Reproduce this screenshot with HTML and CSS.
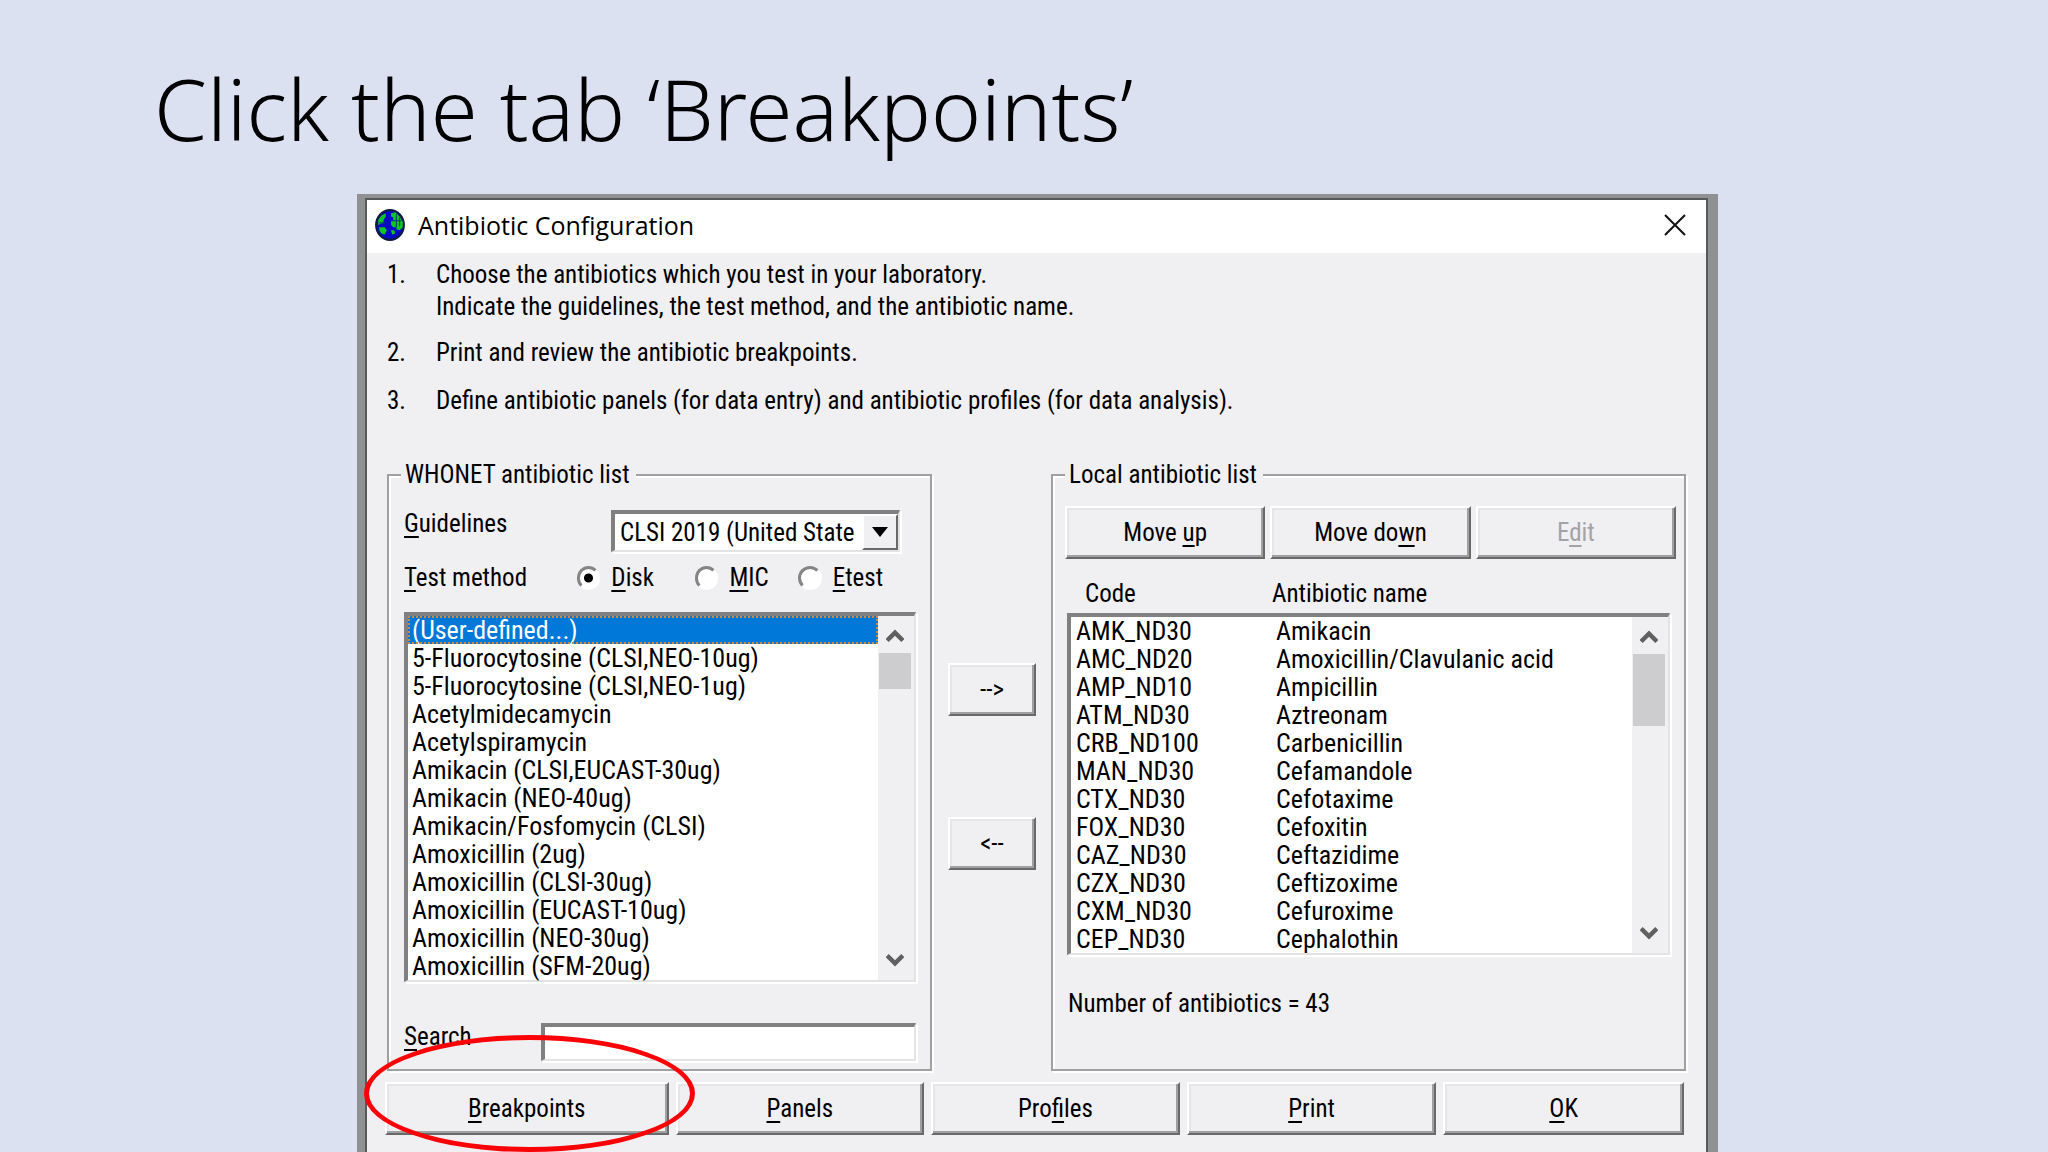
FILE: index.html
```html
<!DOCTYPE html>
<html lang="en">
<head>
<meta charset="utf-8">
<meta name="viewport" content="width=device-width, initial-scale=1">
<title>Click the tab ‘Breakpoints’</title>
<link rel="stylesheet" href="styles.css">
</head>
<body>
<main class="slide">
  <h1 class="slide-title">Click the tab ‘Breakpoints’</h1>
  <section class="window" aria-labelledby="window-title">
    <header class="titlebar">
      <svg class="globe" viewBox="0 0 28 30" aria-hidden="true">
        <ellipse cx="14" cy="15" rx="13" ry="14" fill="#0808c8" stroke="#0c1c40" stroke-width="2"/>
        <path d="M3 10l3-4 4-2v3l-2 3v3l-3 1-2 1zM4 17h5l2 3-2 4-3-1-2-3zM15 4l4-1 4 4 3 5v5l-3 3-3-1v-2h-3l-2-2v-4h2V8l-2-1zM15 20h3l1 3-3 1z" fill="#0cc81c"/>
        <path d="M15 11h10M20 5v12M23 8v8M4 13h5" stroke="#063c70" stroke-width="1" fill="none"/>
      </svg>
      <h2 class="window-title" id="window-title">Antibiotic Configuration</h2>
      <button class="close" type="button" aria-label="Close">
        <svg viewBox="0 0 22 22" aria-hidden="true"><path d="M1 1l20 20M21 1L1 21" fill="none" stroke="#111" stroke-width="2"/></svg>
      </button>
    </header>
    <form class="content">
      <ol class="steps">
        <li><span class="num">1.</span><span>Choose the antibiotics which you test in your laboratory.<br>Indicate the guidelines, the test method, and the antibiotic name.</span></li>
        <li><span class="num">2.</span><span>Print and review the antibiotic breakpoints.</span></li>
        <li><span class="num">3.</span><span>Define antibiotic panels (for data entry) and antibiotic profiles (for data analysis).</span></li>
      </ol>
      <div class="columns">
        <fieldset class="group whonet">
          <legend>WHONET antibiotic list</legend>
          <div class="row guidelines">
            <label for="guidelines"><u>G</u>uidelines</label>
            <div class="combo sunken">
              <select id="guidelines"><option>CLSI 2019 (United State</option></select>
              <span class="combo-arrow" aria-hidden="true"><svg viewBox="0 0 16 10"><path d="M0 0h16L8 10z"/></svg></span>
            </div>
          </div>
          <div class="row method">
            <span class="method-label"><u>T</u>est method</span>
            <input type="radio" name="method" id="disk" checked><label for="disk"><u>D</u>isk</label>
            <input type="radio" name="method" id="mic"><label for="mic"><u>M</u>IC</label>
            <input type="radio" name="method" id="etest"><label for="etest"><u>E</u>test</label>
          </div>
          <div class="list sunken">
            <ul class="items" role="listbox" aria-label="WHONET antibiotic list">
              <li role="option" aria-selected="true">(User-defined...)</li>
              <li role="option">5-Fluorocytosine (CLSI,NEO-10ug)</li>
              <li role="option">5-Fluorocytosine (CLSI,NEO-1ug)</li>
              <li role="option">Acetylmidecamycin</li>
              <li role="option">Acetylspiramycin</li>
              <li role="option">Amikacin (CLSI,EUCAST-30ug)</li>
              <li role="option">Amikacin (NEO-40ug)</li>
              <li role="option">Amikacin/Fosfomycin (CLSI)</li>
              <li role="option">Amoxicillin (2ug)</li>
              <li role="option">Amoxicillin (CLSI-30ug)</li>
              <li role="option">Amoxicillin (EUCAST-10ug)</li>
              <li role="option">Amoxicillin (NEO-30ug)</li>
              <li role="option">Amoxicillin (SFM-20ug)</li>
            </ul>
            <div class="scrollbar" aria-hidden="true">
              <svg class="chevron" viewBox="0 0 16 12"><path d="M1 10l7-7 7 7"/></svg>
              <div class="track"><div class="thumb"></div></div>
              <svg class="chevron" viewBox="0 0 16 12"><path d="M1 2l7 7 7-7"/></svg>
            </div>
          </div>
          <div class="row search">
            <label for="search"><u>S</u>earch</label>
            <input class="sunken" type="text" id="search">
          </div>
        </fieldset>
        <div class="transfer">
          <button class="btn" type="button" aria-label="Add to local list">--&gt;</button>
          <button class="btn" type="button" aria-label="Remove from local list">&lt;--</button>
        </div>
        <fieldset class="group local">
          <legend>Local antibiotic list</legend>
          <div class="actions">
            <button class="btn" type="button">Move <u>u</u>p</button>
            <button class="btn" type="button">Move do<u>w</u>n</button>
            <button class="btn" type="button" disabled>E<u>d</u>it</button>
          </div>
          <div class="heads"><span>Code</span><span>Antibiotic name</span></div>
          <div class="list sunken">
            <table class="items" aria-label="Local antibiotic list">
              <tbody>
                <tr><td class="code">AMK_ND30</td><td>Amikacin</td></tr>
                <tr><td class="code">AMC_ND20</td><td>Amoxicillin/Clavulanic acid</td></tr>
                <tr><td class="code">AMP_ND10</td><td>Ampicillin</td></tr>
                <tr><td class="code">ATM_ND30</td><td>Aztreonam</td></tr>
                <tr><td class="code">CRB_ND100</td><td>Carbenicillin</td></tr>
                <tr><td class="code">MAN_ND30</td><td>Cefamandole</td></tr>
                <tr><td class="code">CTX_ND30</td><td>Cefotaxime</td></tr>
                <tr><td class="code">FOX_ND30</td><td>Cefoxitin</td></tr>
                <tr><td class="code">CAZ_ND30</td><td>Ceftazidime</td></tr>
                <tr><td class="code">CZX_ND30</td><td>Ceftizoxime</td></tr>
                <tr><td class="code">CXM_ND30</td><td>Cefuroxime</td></tr>
                <tr><td class="code">CEP_ND30</td><td>Cephalothin</td></tr>
              </tbody>
            </table>
            <div class="scrollbar" aria-hidden="true">
              <svg class="chevron" viewBox="0 0 16 12"><path d="M1 10l7-7 7 7"/></svg>
              <div class="track"><div class="thumb"></div></div>
              <svg class="chevron" viewBox="0 0 16 12"><path d="M1 2l7 7 7-7"/></svg>
            </div>
          </div>
          <p class="count">Number of antibiotics = 43</p>
        </fieldset>
      </div>
      <div class="bottom">
        <div class="marked"><button class="btn" type="button"><u>B</u>reakpoints</button></div>
        <button class="btn" type="button"><u>P</u>anels</button>
        <button class="btn" type="button">Pro<u>f</u>iles</button>
        <button class="btn" type="button"><u>P</u>rint</button>
        <button class="btn" type="button"><u>O</u>K</button>
      </div>
    </form>
  </section>
</main>
</body>
</html>
```
FILE: styles.css
```css
:root {
  --face: #f0eff2;
  --shade: #a0a0a0;
  --dark: #696969;
}

* {
  box-sizing: border-box;
}

body {
  margin: 0;
  background: #dce1f2;
  color: #000;
  font: 25px/28px "Roboto Condensed", Roboto, "Liberation Sans", sans-serif;
}

h1, h2, p, ol, ul {
  margin: 0;
  padding: 0;
}

ol, ul {
  list-style: none;
}

button, input, select {
  margin: 0;
  font: inherit;
  color: inherit;
}

u {
  text-decoration-thickness: 2px;
  text-underline-offset: 4px;
  text-decoration-skip-ink: none;
}

.slide {
  display: flex;
  flex-direction: column;
  min-height: 100vh;
}

.slide-title {
  padding: 50px 154px 28px;
  font: 300 85px/116px "Noto Sans", "Open Sans", sans-serif;
}

/* Dialog frame */
.window {
  flex: 1;
  margin: 0 330px 0 357px;
  border: solid #8f9192;
  border-width: 4px 10px 0 8px;
}

.titlebar {
  display: flex;
  align-items: center;
  height: 55px;
  padding: 0 20px 4px 8px;
  border: solid #58595b;
  border-width: 2px 2px 0;
  background: #fff;
}

.globe {
  width: 30px;
  height: 32px;
}

.window-title {
  flex: 1;
  padding-left: 13px;
  font: 400 25px/32px "Open Sans", "Noto Sans", sans-serif;
}

.close {
  display: flex;
  padding: 0;
  border: 0;
  background: none;
}

.close svg {
  width: 22px;
  height: 22px;
}

.content {
  padding: 6px 20px 18px;
  border: solid #58595b;
  border-width: 0 2px;
  background: var(--face);
}

/* Instructions */
.steps {
  margin-bottom: 44px;
  line-height: 32px;
}

.steps li {
  display: flex;
}

.steps li + li {
  margin-top: 14px;
}

.steps li:last-child {
  margin-top: 16px;
}

.num {
  flex: none;
  width: 49px;
}

.columns {
  display: grid;
  grid-template-columns: 545fr 119fr 635fr;
}

.group {
  min-width: 0;
  margin: 0;
  border: 2px solid var(--shade);
  box-shadow: 2px 2px 0 #fff, inset 2px 2px 0 #fff;
}

.group legend {
  padding: 0 6px 0 4px;
  background: var(--face);
}

.whonet {
  padding: 21px 14px 8px 15px;
}

.whonet legend {
  margin-left: -3px;
}

.local {
  padding: 17px 8px 8px 12px;
}

.sunken {
  border: solid;
  border-width: 4px 2px 2px 4px;
  border-color: #808080 #e3e3e3 #e3e3e3 #808080;
  background: #fff;
  box-shadow: 2px 2px 0 #fff;
}

.btn {
  height: 53px;
  padding: 0;
  border: 2px solid;
  border-color: #fff var(--dark) var(--dark) #fff;
  background: var(--face);
  box-shadow: inset -2px -2px 0 var(--shade), inset 2px 2px 0 #e6e5e8;
}

.btn:disabled {
  color: #a3a2a5;
}

.row {
  display: flex;
}

/* Guidelines drop-down */
.guidelines {
  justify-content: space-between;
  padding-right: 16px;
}

.combo {
  display: flex;
  width: 289px;
  height: 42px;
}

.combo select {
  flex: 1;
  min-width: 0;
  padding: 2px 0 0 5px;
  border: 0;
  background: none;
  appearance: none;
}

.combo-arrow {
  display: grid;
  place-items: center;
  width: 36px;
  border: 2px solid;
  border-color: #fff var(--dark) var(--dark) #fff;
  background: var(--face);
}

.combo-arrow svg {
  width: 16px;
  height: 10px;
}

/* Test method */
.method {
  align-items: center;
  height: 32px;
  margin: 10px 0 18px;
}

.method-label {
  width: 174px;
}

.method input {
  width: 24px;
  height: 24px;
  margin-right: 11px;
  border: 3px solid;
  border-color: #858585 #fff #fff #858585;
  border-radius: 50%;
  background: #fff;
  appearance: none;
}

.method input:checked {
  background: radial-gradient(circle, #000 4px, #fff 5px);
}

.method label {
  width: 84px;
}

.method label[for="mic"] {
  width: 69px;
}

/* Lists */
.list {
  display: flex;
}

.items {
  flex: 1;
  border-collapse: collapse;
  font-size: 26px;
}

.items li {
  height: 28px;
  padding-left: 4px;
}

.items li[aria-selected="true"] {
  outline: 2px dotted #d08a3c;
  outline-offset: -2px;
  background: #0078d9;
  color: #fff;
}

.items td {
  height: 28px;
  padding: 0;
}

.items .code {
  width: 205px;
  padding-left: 5px;
}

.scrollbar {
  display: flex;
  flex-direction: column;
  align-items: center;
  width: 36px;
  padding: 13px 2px 13px 0;
  background: var(--face);
}

.chevron {
  width: 18px;
  height: 14px;
}

.chevron path {
  fill: none;
  stroke: #606060;
  stroke-width: 4;
}

.track {
  flex: 1;
  width: 100%;
  padding: 10px 1px;
}

.thumb {
  height: 36px;
  background: #cdccce;
}

.local .thumb {
  height: 72px;
}

.search {
  justify-content: space-between;
  margin-top: 41px;
}

.search input {
  width: 375px;
  height: 38px;
}

.transfer {
  display: flex;
  flex-direction: column;
  gap: 101px;
  padding: 202px 15px 0 16px;
}

.actions {
  display: grid;
  grid-template-columns: repeat(3, 1fr);
  gap: 5px;
}

.heads {
  display: grid;
  grid-template-columns: 187px 1fr;
  margin: 21px 0 5px;
  padding-left: 20px;
}

.local .list {
  margin: 0 6px 0 2px;
}

.count {
  margin: 35px 0 0 3px;
}

/* Bottom buttons */
.bottom {
  display: grid;
  grid-template-columns: 284fr 249fr 249fr 250fr 241fr;
  gap: 7px;
  margin: 11px 2px 0 -2px;
}

.marked {
  position: relative;
  display: grid;
}

.marked::after {
  content: "";
  position: absolute;
  inset: -47px -26px -17px -21px;
  border: 5px solid #fb0207;
  border-radius: 50%;
  pointer-events: none;
}
```
